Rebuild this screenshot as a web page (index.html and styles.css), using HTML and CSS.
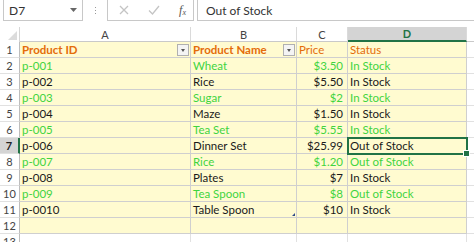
FILE: index.html
```html
<!DOCTYPE html>
<html>
<head>
<meta charset="utf-8">
<link rel="stylesheet" href="styles.css">
</head>
<body>
<div class="app">
  <div class="fbar">
    <div class="namebox"><span>D7</span><svg class="caret" width="7" height="4" viewBox="0 0 7 4"><path d="M0 0h7L3.5 4z" fill="#666"/></svg></div>
    <div class="dots"><i></i><i></i><i></i></div>
    <div class="fbtns">
      <svg width="10" height="10" viewBox="0 0 10 10"><path d="M1 1L9 9M9 1L1 9" stroke="#c4c4c4" stroke-width="1.3"/></svg>
      <svg width="12" height="10" viewBox="0 0 12 10"><path d="M1 5.5L4.5 9L11 1" stroke="#c4c4c4" stroke-width="1.3" fill="none"/></svg>
      <span class="fx">f<sub>x</sub></span>
    </div>
    <div class="finput">Out of Stock</div>
  </div>
  <div class="sheet">
    <div class="corner"><svg width="9" height="9" viewBox="0 0 9 9"><path d="M9 0V9H0z" fill="#dcdcdc"/></svg></div>
    <div class="ch">A</div>
    <div class="ch">B</div>
    <div class="ch">C</div>
    <div class="ch sel">D</div>
    <div class="ch e"></div>

    <div class="rh">1</div>
    <div class="c hd b">Product ID<span class="flt"></span></div>
    <div class="c hd b">Product Name<span class="flt"></span></div>
    <div class="c hd">Price</div>
    <div class="c hd">Status</div>
    <div class="c e"></div>

    <div class="rh">2</div><div class="c g">p-001</div><div class="c g">Wheat</div><div class="c g r">$3.50</div><div class="c g">In Stock</div><div class="c e"></div>
    <div class="rh">3</div><div class="c">p-002</div><div class="c">Rice</div><div class="c r">$5.50</div><div class="c">In Stock</div><div class="c e"></div>
    <div class="rh">4</div><div class="c g">p-003</div><div class="c g">Sugar</div><div class="c g r">$2</div><div class="c g">In Stock</div><div class="c e"></div>
    <div class="rh">5</div><div class="c">p-004</div><div class="c">Maze</div><div class="c r">$1.50</div><div class="c">In Stock</div><div class="c e"></div>
    <div class="rh">6</div><div class="c g">p-005</div><div class="c g">Tea Set</div><div class="c g r">$5.55</div><div class="c g">In Stock</div><div class="c e"></div>
    <div class="rh sel">7</div><div class="c">p-006</div><div class="c">Dinner Set</div><div class="c r">$25.99</div><div class="c active">Out of Stock<span class="handle"></span></div><div class="c e"></div>
    <div class="rh">8</div><div class="c g">p-007</div><div class="c g">Rice</div><div class="c g r">$1.20</div><div class="c g">Out of Stock</div><div class="c e"></div>
    <div class="rh">9</div><div class="c">p-008</div><div class="c">Plates</div><div class="c r">$7</div><div class="c">In Stock</div><div class="c e"></div>
    <div class="rh">10</div><div class="c g">p-009</div><div class="c g">Tea Spoon</div><div class="c g r">$8</div><div class="c g">Out of Stock</div><div class="c e"></div>
    <div class="rh">11</div><div class="c">p-0010</div><div class="c">Table Spoon<span class="rz"></span></div><div class="c r">$10</div><div class="c">In Stock</div><div class="c e"></div>
    <div class="rh">12</div><div class="c"></div><div class="c"></div><div class="c"></div><div class="c"></div><div class="c e"></div>
    <div class="rh">13</div><div class="c w"></div><div class="c w"></div><div class="c w"></div><div class="c w"></div><div class="c e"></div>
  </div>
</div>
</body>
</html>
```

FILE: styles.css
```css
* { box-sizing: border-box; }
html, body { margin: 0; padding: 0; background: #fff; }
body {
  width: 474px; height: 242px; overflow: hidden;
  font-family: Lato, "Open Sans", sans-serif;
  font-size: 11.5px; color: #1a1a1a;
}
.fbar {
  display: flex; align-items: stretch; height: 21px;
}
.namebox {
  margin-left: 3px; width: 80px;
  border: 1px solid #c8c8c8; border-top: none;
  display: flex; align-items: center; justify-content: space-between;
  padding: 0 5px 0 5px; font-size: 12px; color: #333;
}
.dots {
  width: 24px; display: flex; flex-direction: column; align-items: center; justify-content: center; gap: 2px;
}
.dots i { display: block; width: 1px; height: 1px; background: #999; }
.fbtns {
  width: 87px; border: 1px solid #c8c8c8; border-top: none;
  display: flex; align-items: center; justify-content: space-between; padding: 0 7px 0 11px;
}
.fx { font-family: "Liberation Serif", serif; font-style: italic; font-size: 12px; color: #555; }
.fx sub { font-size: 8px; vertical-align: -1px; }
.finput {
  margin-left: 3px; flex: 1; border: 1px solid #c8c8c8; border-top: none; border-right: none;
  display: flex; align-items: center; padding-left: 8px; font-size: 12px; color: #333;
}
.sheet {
  margin-top: 6px;
  display: grid;
  grid-template-columns: 20px 171px 106px 51px 119px 7px;
  grid-template-rows: 15px repeat(12, 16px) 16px;
}
.corner { display: flex; align-items: flex-end; justify-content: flex-end; padding: 0 2px 2px 0; border-right: 1px solid #d6d6d6; }
.ch {
  display: flex; align-items: center; justify-content: center;
  border-right: 1px solid #dadada; color: #444; font-size: 11px;
  border-bottom: 1px solid #c9c9c9;
}
.ch.sel { background: #d4d4d4; color: #217346; font-weight: bold; border-bottom: 2px solid #217346; }
.ch.e { border-right: none; }
.rh {
  display: flex; align-items: center; justify-content: center;
  border-right: 1px solid #bdbdbd; border-bottom: 1px solid #e1e1e1;
  color: #444; font-size: 11px;
}
.rh.sel { background: #d4d4d4; color: #222; font-weight: bold; border-right: 2px solid #217346; }
.c {
  position: relative;
  background: #fffbd0;
  border-right: 1px solid #cfcfcf; border-bottom: 1px solid #cfcfcf;
  padding: 0 2px; line-height: 15px; white-space: nowrap; overflow: visible;
}
.c.w { background: #fff; border-bottom-color: #e1e1e1; border-right-color: #e1e1e1; }
.c.e { background: #fff; border-right: none; border-bottom-color: #e1e1e1; }
.c.r { text-align: right; padding-right: 4px; }
.c.g { color: #3fd43f; }
.c.hd { color: #e46c0a; }
.c.b { font-weight: bold; }
.flt {
  position: absolute; right: 1px; top: 2px; width: 12px; height: 12px;
  border: 1px solid #b0b0b0; background: #f4f4f4;
}
.flt::after {
  content: ""; position: absolute; left: 3px; top: 4px;
  border-left: 2.5px solid transparent; border-right: 2.5px solid transparent; border-top: 3px solid #555;
}
.active { outline: 2px solid #217346; outline-offset: -1px; z-index: 2; }
.handle {
  position: absolute; right: -4px; bottom: -4px; width: 5px; height: 5px;
  background: #217346; border: 1px solid #fff; box-sizing: content-box;
}
.rz {
  position: absolute; right: 1px; bottom: 1px; width: 0; height: 0;
  border-left: 3px solid transparent; border-bottom: 3px solid #2d4a8a;
}
```
